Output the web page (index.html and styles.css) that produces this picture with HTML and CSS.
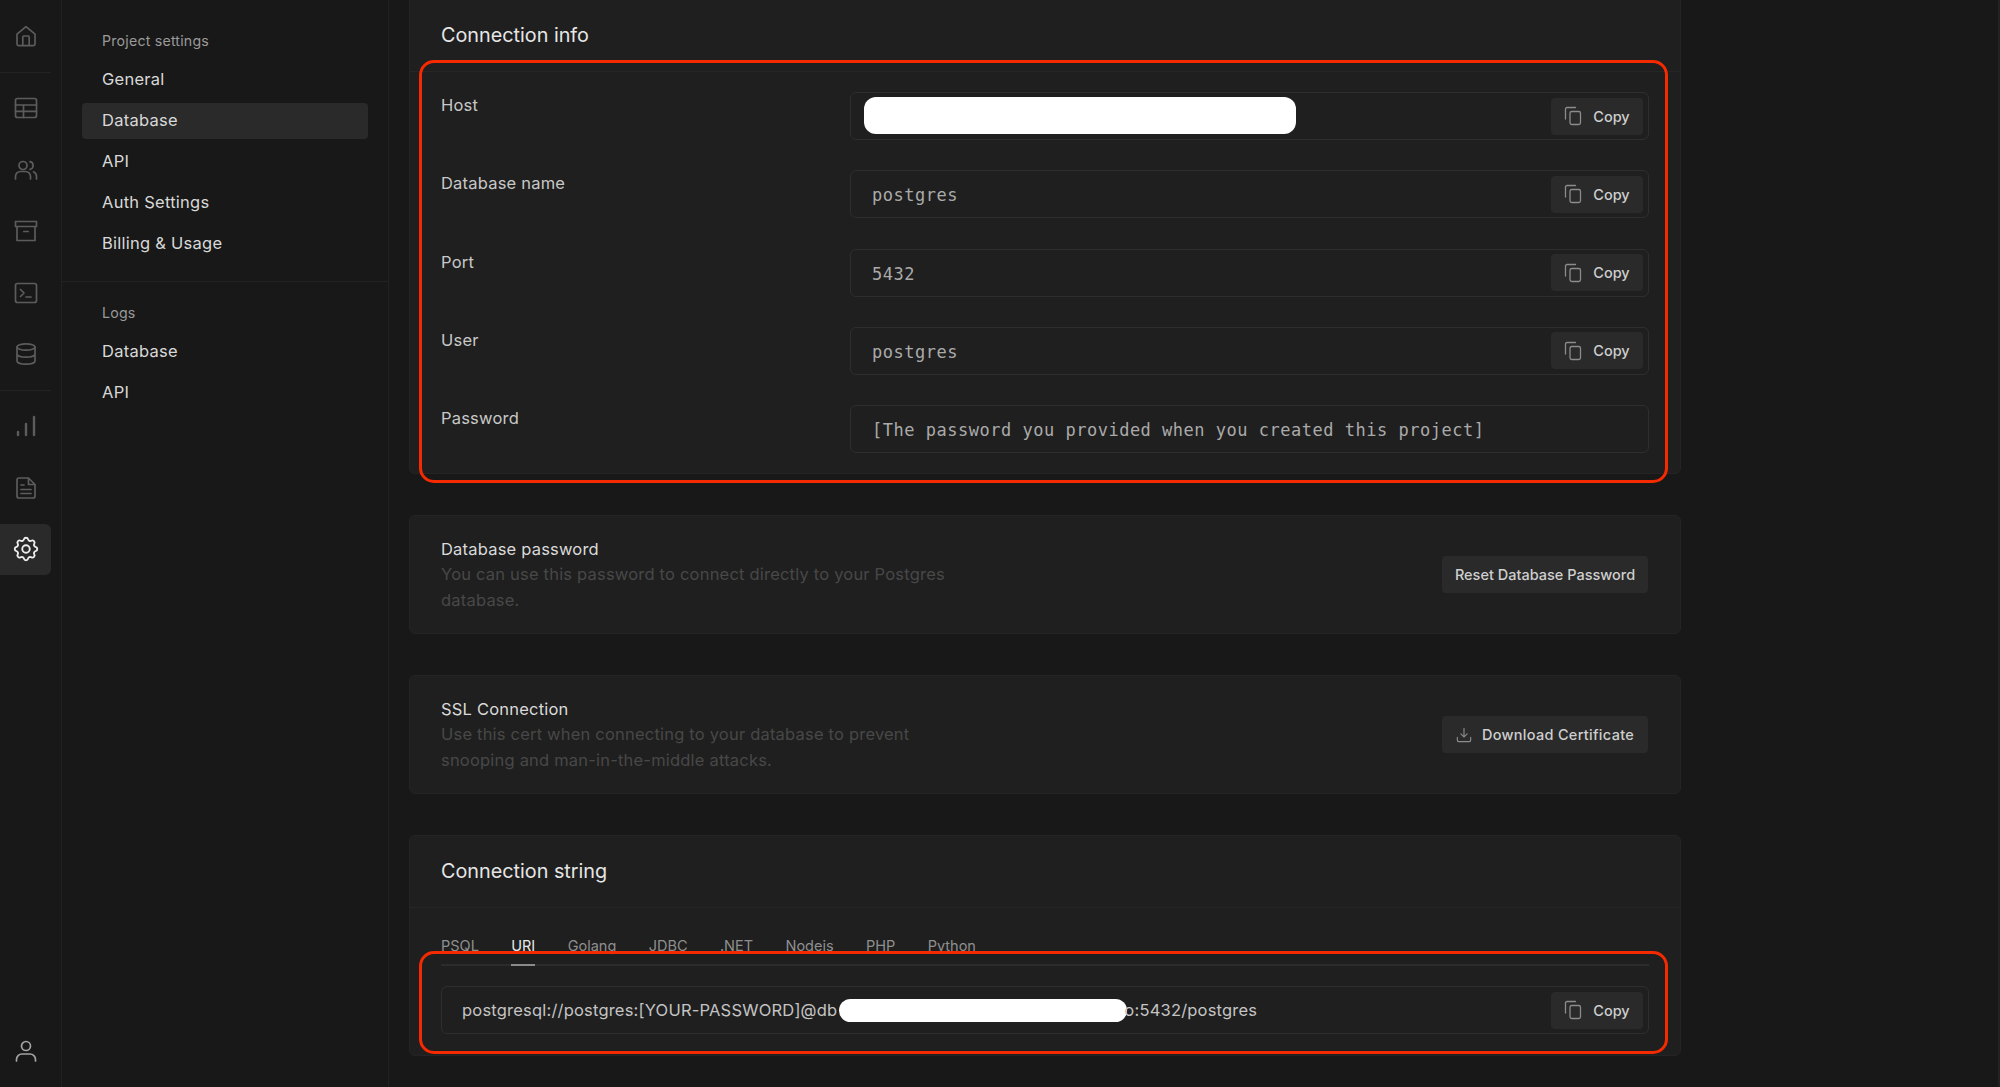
FILE: index.html
```html
<!DOCTYPE html>
<html lang="en">
<head>
<meta charset="utf-8">
<title>Database settings</title>
<link rel="stylesheet" href="styles.css">
</head>
<body>
<svg class="defs" width="0" height="0" aria-hidden="true">
  <symbol id="i-copy" viewBox="0 0 18 20" fill="none">
    <path d="M11.5 1.5H3A1.5 1.5 0 0 0 1.5 3v10" stroke-linecap="round"/>
    <rect x="6" y="5.5" width="10.5" height="13" rx="1.8"/>
  </symbol>
</svg>
<nav class="rail">
  <a class="rail-item"><svg class="ico" viewBox="0 0 24 24"><path d="M3 10.2 12 2.600l9 7.600V20a1.600 1.600 0 0 1-1.600 1.600H4.600A1.600 1.600 0 0 1 3 20zM8.800 21.600V13a1 1 0 0 1 1-1h4.400a1 1 0 0 1 1 1v8.600"/></svg></a>
  <div class="rail-div"></div>
  <a class="rail-item"><svg class="ico" viewBox="0 0 24 24"><rect x="1.500" y="2.500" width="21" height="19" rx="2"/><path d="M1.500 9h21M1.500 15.300h21M9.500 9v12.500"/></svg></a>
  <a class="rail-item"><svg class="ico" viewBox="0 0 24 24"><circle cx="9" cy="7.500" r="4"/><path d="M1.500 21v-2.500a5 5 0 0 1 5-5h5a5 5 0 0 1 5 5V21M16 3.600a4 4 0 0 1 0 7.800M19.500 13.800a5 5 0 0 1 3 4.700V21"/></svg></a>
  <a class="rail-item"><svg class="ico" viewBox="0 0 24 24"><path d="M1.500 2.500h21v5h-21zM3 7.500v14h18v-14M9.800 12.500h4.400"/></svg></a>
  <a class="rail-item"><svg class="ico" viewBox="0 0 24 24"><rect x="1.500" y="2.500" width="21" height="19" rx="2"/><path d="m6.500 8.500 3.500 3.500-3.500 3.500M12 16h5"/></svg></a>
  <a class="rail-item"><svg class="ico" viewBox="0 0 24 24"><ellipse cx="12" cy="5" rx="9" ry="3.200"/><path d="M3 5v14c0 1.800 4 3.200 9 3.200s9-1.400 9-3.200V5M3 12c0 1.800 4 3.200 9 3.200s9-1.400 9-3.200"/></svg></a>
  <div class="rail-div"></div>
  <a class="rail-item"><svg class="ico ico-thick" viewBox="0 0 24 24"><path d="M4 21v-3M12 21V10M20 21V3"/></svg></a>
  <a class="rail-item"><svg class="ico" viewBox="0 0 24 24"><path d="M14.500 2H5a2 2 0 0 0-2 2v16a2 2 0 0 0 2 2h14a2 2 0 0 0 2-2V8.500zM14.500 2v6.500H21M7 9h3M7 13.500h10M7 17.500h10"/></svg></a>
  <a class="rail-item is-active"><svg class="ico ico-gear" viewBox="0 0 24 24"><path d="M10.325 4.317c.426-1.756 2.924-1.756 3.350 0a1.724 1.724 0 002.573 1.066c1.543-.94 3.310.826 2.370 2.370a1.724 1.724 0 001.065 2.572c1.756.426 1.756 2.924 0 3.350a1.724 1.724 0 00-1.066 2.573c.94 1.543-.826 3.310-2.370 2.370a1.724 1.724 0 00-2.572 1.065c-.426 1.756-2.924 1.756-3.350 0a1.724 1.724 0 00-2.573-1.066c-1.543.94-3.310-.826-2.370-2.370a1.724 1.724 0 00-1.065-2.572c-1.756-.426-1.756-2.924 0-3.350a1.724 1.724 0 001.066-2.573c-.94-1.543.826-3.310 2.370-2.370.996.608 2.296.07 2.572-1.065z"/><circle cx="12" cy="12" r="3"/></svg></a>
  <a class="rail-item rail-user"><svg class="ico" viewBox="0 0 24 24"><circle cx="12" cy="7" r="4.500"/><path d="M2.500 22v-1.500a5.500 5.500 0 0 1 5.500-5.500h8a5.500 5.500 0 0 1 5.500 5.500V22"/></svg></a>
</nav>

<aside class="menu">
  <section class="menu-group">
    <h4 class="menu-title">Project settings</h4>
    <a class="menu-item">General</a>
    <a class="menu-item is-active">Database</a>
    <a class="menu-item">API</a>
    <a class="menu-item">Auth Settings</a>
    <a class="menu-item">Billing &amp; Usage</a>
  </section>
  <section class="menu-group menu-group-logs">
    <h4 class="menu-title">Logs</h4>
    <a class="menu-item">Database</a>
    <a class="menu-item">API</a>
  </section>
</aside>

<main class="main">
  <section class="card card-first">
    <h2 class="card-head">Connection info</h2>
    <div class="fields">
      <div class="field">
        <label class="field-label">Host</label>
        <div class="input"><span class="pill pill-host"></span><button class="btn btn-copy"><svg class="btn-ico"><use href="#i-copy"/></svg>Copy</button></div>
      </div>
      <div class="field">
        <label class="field-label">Database name</label>
        <div class="input"><span class="mono">postgres</span><button class="btn btn-copy"><svg class="btn-ico"><use href="#i-copy"/></svg>Copy</button></div>
      </div>
      <div class="field">
        <label class="field-label">Port</label>
        <div class="input"><span class="mono">5432</span><button class="btn btn-copy"><svg class="btn-ico"><use href="#i-copy"/></svg>Copy</button></div>
      </div>
      <div class="field">
        <label class="field-label">User</label>
        <div class="input"><span class="mono">postgres</span><button class="btn btn-copy"><svg class="btn-ico"><use href="#i-copy"/></svg>Copy</button></div>
      </div>
      <div class="field">
        <label class="field-label">Password</label>
        <div class="input"><span class="mono">[The password you provided when you created this project]</span></div>
      </div>
    </div>
  </section>

  <section class="card card-row">
    <div class="row-text">
      <h3 class="row-title">Database password</h3>
      <p class="row-desc">You can use this password to connect directly to your Postgres database.</p>
    </div>
    <button class="btn btn-action">Reset Database Password</button>
  </section>

  <section class="card card-row">
    <div class="row-text">
      <h3 class="row-title">SSL Connection</h3>
      <p class="row-desc">Use this cert when connecting to your database to prevent snooping and man-in-the-middle attacks.</p>
    </div>
    <button class="btn btn-action btn-dl"><svg class="btn-ico btn-ico-dl" viewBox="0 0 18 18" fill="none"><path d="M9 1.500V11M5.500 7.800 9 11.300l3.500-3.500M1.500 11.500V15a1.500 1.500 0 0 0 1.500 1.500h12a1.500 1.500 0 0 0 1.500-1.500v-3.500" stroke-linecap="round"/></svg>Download Certificate</button>
  </section>

  <section class="card card-string">
    <h2 class="card-head">Connection string</h2>
    <div class="string-body">
      <div class="tabs">
        <a class="tab">PSQL</a>
        <a class="tab is-active">URI</a>
        <a class="tab">Golang</a>
        <a class="tab">JDBC</a>
        <a class="tab">.NET</a>
        <a class="tab">Nodejs</a>
        <a class="tab">PHP</a>
        <a class="tab">Python</a>
      </div>
      <div class="input input-uri"><span class="uri">postgresql://postgres:[YOUR-PASSWORD]@db<span class="pill pill-uri"></span>o:5432/postgres</span><button class="btn btn-copy"><svg class="btn-ico"><use href="#i-copy"/></svg>Copy</button></div>
    </div>
  </section>

  <div class="mark mark-info"></div>
  <div class="mark mark-string"></div>
</main>
<div class="edge"></div>
</body>
</html>
```
FILE: styles.css
```css
* { box-sizing: border-box; }
html, body { height: 100%; }
body {
  margin: 0;
  height: 1087px;
  overflow: hidden;
  display: flex;
  background: #181818;
  color: #d4d4d4;
  font-family: "Inter", "Liberation Sans", sans-serif;
  font-size: 16.500px;
  letter-spacing: 0.200px;
}
.defs { position: absolute; }

/* icon rail */
.rail {
  width: 62px;
  flex: none;
  display: flex;
  flex-direction: column;
  gap: 10.500px;
  padding: 10.500px 10px 11px 0;
  border-right: 1px solid #222;
}
.rail-item {
  height: 51px;
  flex: none;
  display: flex;
  align-items: center;
  justify-content: center;
  border-radius: 0 6px 6px 0;
}
.rail-item.is-active { background: #2a2a2a; }
.rail-div { height: 1px; margin-bottom: -1px; background: #232323; flex: none; }
.rail-user { margin-top: auto; }
.ico {
  width: 24px;
  height: 24px;
  fill: none;
  stroke: #5c5c5c;
  stroke-width: 1.700;
  stroke-linecap: round;
  stroke-linejoin: round;
}
.ico-thick { stroke-width: 2.400; }
.ico-gear { width: 30px; height: 30px; stroke-width: 1.500; }
.is-active .ico { stroke: #ededed; }
.rail-user .ico { stroke: #a3a3a3; }

/* settings menu */
.menu {
  width: 327px;
  flex: none;
  border-right: 1px solid #222;
}
.menu-group { padding: 31px 20px 0; }
.menu-group:first-child { padding-bottom: 19px; border-bottom: 1px solid #222; }
.menu-group-logs { padding-top: 21px; }
.menu-title {
  margin: 0 0 11px;
  padding-left: 20px;
  font-size: 14.200px;
  line-height: 20px;
  font-weight: 400;
  color: #9a9a9a;
}
.menu-item {
  display: block;
  height: 36px;
  line-height: 34px;
  margin-bottom: 5px;
  padding-left: 20px;
  border-radius: 4px;
  color: #d8d8d8;
  letter-spacing: 0.250px;
}
.menu-item:last-child { margin-bottom: 0; }
.menu-item.is-active { background: #2a2a2a; }

/* main column */
.main {
  position: relative;
  width: 1609px;
  flex: none;
  padding-left: 20px;
}
.card {
  width: 1272px;
  background: #1f1f1f;
  border: 1px solid #242424;
  border-radius: 6px;
  margin-bottom: 41px;
}
.card-first { border-top: 0; border-radius: 0 0 6px 6px; }
.card-head {
  margin: 0;
  height: 72px;
  padding: 0 31px;
  line-height: 71px;
  font-size: 19.800px;
  letter-spacing: 0;
  font-weight: 400;
  color: #e6e6e6;
  border-bottom: 1px solid #262626;
}
.fields {
  display: flex;
  flex-direction: column;
  gap: 30.250px;
  padding: 20px 31px 20px;
}
.field { display: grid; grid-template-columns: 409px 799px; }
.field-label { line-height: 26px; color: #c8c8c8; }
.input {
  height: 48px;
  display: flex;
  align-items: center;
  justify-content: space-between;
  padding: 0 5px 0 21px;
  border: 1px solid #2e2e2e;
  border-radius: 6px;
}
.mono {
  padding-top: 2px;
  font-family: "DejaVu Sans Mono", "Liberation Mono", monospace;
  font-size: 17px;
  letter-spacing: 0.510px;
  color: #aaa;
}
.pill { display: inline-block; background: #fff; border-radius: 12px; }
.pill-host { width: 432px; height: 37px; margin: 0 0 2px -8px; }
.btn {
  display: inline-flex;
  align-items: center;
  justify-content: center;
  height: 37px;
  padding: 0;
  background: #2a2a2a;
  color: #cfcfcf;
  border: 0;
  border-radius: 4px;
  font: inherit;
  font-size: 14.500px;
  letter-spacing: 0;
  font-weight: 500;
}
.btn-copy { width: 92px; gap: 11px; }
.btn-ico {
  width: 18px;
  height: 20px;
  fill: none;
  stroke: #8c8c8c;
  stroke-width: 1.300;
}
.btn-ico-dl { width: 16px; height: 16px; stroke-width: 1.300; }

/* description rows */
.card-row {
  height: 119px;
  display: flex;
  align-items: center;
  justify-content: space-between;
  padding: 0 32px 0 31px;
}
.row-text { width: 530px; }
.row-title { margin: 0; font-size: inherit; line-height: 24px; font-weight: 400; color: #dadada; }
.row-desc { margin: 0; line-height: 26px; color: #484848; }
.btn-action { width: 206px; gap: 13px; }
.btn-dl { letter-spacing: 0.300px; gap: 10px; }

/* connection string */
.card-string { height: 221px; margin-bottom: 0; }
.string-body { padding: 27px 31px 0; }
.tabs {
  display: flex;
  height: 31px;
  gap: 32.400px;
  border-bottom: 2px solid #2c2c2c;
}
.tab {
  position: relative;
  font-size: 14.500px;
  letter-spacing: 0;
  line-height: 22px;
  color: #8f8f8f;
}
.tab.is-active { color: #e8e8e8; }
.tab.is-active::after {
  content: "";
  position: absolute;
  left: 0;
  right: 0;
  bottom: -2px;
  height: 2px;
  background: #8a8a8a;
}
.input-uri { margin-top: 20px; height: 48px; padding-left: 20px; }
.uri { display: inline-flex; align-items: center; color: #c4c4c4; white-space: pre; }
.pill-uri { width: 288px; height: 23px; margin: 0 -3px 0 2px; }

/* red annotation frames */
.mark {
  position: absolute;
  border: 3px solid #f52a00;
  border-radius: 15px;
  left: 30px;
  width: 1249px;
}
.mark-info { top: 60px; height: 423px; }
.mark-string { top: 951px; height: 103px; }

.edge { width: 2px; flex: none; margin-left: auto; background: #222; }
```
